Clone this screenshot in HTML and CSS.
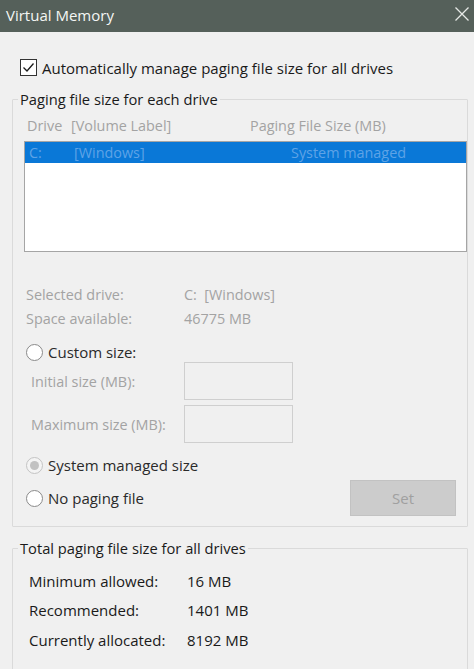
FILE: index.html
```html
<!DOCTYPE html>
<html>
<head>
<meta charset="utf-8">
<link rel="stylesheet" href="styles.css">
</head>
<body>
<div class="window">
  <div class="titlebar">
    <span class="title">Virtual Memory</span>
    <svg class="close" width="14" height="14" viewBox="0 0 14 14"><path d="M0.5 0.5 L13.5 13.5 M13.5 0.5 L0.5 13.5" stroke="#e6e9e6" stroke-width="1.3" fill="none"/></svg>
  </div>
  <div class="main">
    <div class="auto-row">
      <span class="checkbox"><svg width="15" height="15" viewBox="0 0 15 15"><path d="M2.5 7.5 L6 11 L12.5 3.5" stroke="#1a1a1a" stroke-width="1.3" fill="none"/></svg></span>
      <span class="auto-label">Automatically manage paging file size for all drives</span>
    </div>

    <div class="group group-drives">
      <div class="group-label">Paging file size for each drive</div>
      <div class="list-header disabled">
        <span class="col-drive">Drive</span><span class="col-label">[Volume Label]</span><span class="col-size">Paging File Size (MB)</span>
      </div>
      <div class="listbox">
        <div class="list-row selected">
          <span class="row-drive">C:</span><span class="row-label">[Windows]</span><span class="row-size">System managed</span>
        </div>
      </div>

      <div class="info disabled">
        <span>Selected drive:</span><span>C:&nbsp;&nbsp;[Windows]</span>
        <span>Space available:</span><span>46775 MB</span>
      </div>

      <div class="radio-row custom-row">
        <span class="radio"></span><span class="radio-label">Custom size:</span>
      </div>
      <div class="size-row initial-row">
        <span class="size-label disabled">Initial size (MB):</span><span class="textbox"></span>
      </div>
      <div class="size-row max-row">
        <span class="size-label disabled">Maximum size (MB):</span><span class="textbox"></span>
      </div>
      <div class="radio-row system-row">
        <span class="radio radio-checked"><span class="dot"></span></span><span class="radio-label">System managed size</span>
      </div>
      <div class="radio-row nopage-row">
        <span class="radio"></span><span class="radio-label">No paging file</span>
        <span class="set-button">Set</span>
      </div>
    </div>

    <div class="group group-total">
      <div class="group-label">Total paging file size for all drives</div>
      <div class="totals">
        <span>Minimum allowed:</span><span>16 MB</span>
        <span>Recommended:</span><span>1401 MB</span>
        <span>Currently allocated:</span><span>8192 MB</span>
      </div>
    </div>
  </div>
</div>
</body>
</html>
```

FILE: styles.css
```css
* { box-sizing: border-box; }
html, body { margin: 0; padding: 0; }
body {
  font-family: "Open Sans", "Noto Sans", "Liberation Sans", sans-serif;
  font-size: 14px;
  color: #1a1a1a;
  background: #f0f0f0;
}
.window {
  width: 474px;
  height: 669px;
  overflow: hidden;
  background: #f0f0f0;
}
.titlebar {
  height: 32px;
  background: #55605a;
  display: flex;
  align-items: center;
  justify-content: space-between;
  padding: 0 5px 2px 6px;
}
.title {
  color: #f4f6f4;
  font-size: 15px;
}
.close { margin-top: -2px; }

.main {
  padding: 0 6px 0 12px;
}
.auto-row {
  margin-top: 27px;
  height: 17px;
  padding-left: 8px;
  display: flex;
  align-items: center;
}
.checkbox {
  width: 17px;
  height: 17px;
  border: 1px solid #333;
  background: #fff;
  display: flex;
  align-items: center;
  justify-content: center;
  flex: none;
}
.auto-label {
  margin-left: 5px;
  font-size: 15px;
  white-space: nowrap;
}

.group {
  border: 1px solid #dadada;
  border-radius: 1px;
}
.group-drives {
  margin-top: 23px;
  height: 428px;
}
.group-total {
  margin-top: 21px;
  height: 200px;
}
.group-label {
  margin: -11px 0 0 5px;
  padding: 0 2px;
  width: fit-content;
  line-height: 20px;
  height: 20px;
  background: #f0f0f0;
  font-size: 14.7px;
  white-space: nowrap;
}
.disabled { color: #a3a3a3; }

.list-header {
  margin-top: 7px;
  line-height: 20px;
  height: 20px;
  padding-left: 14px;
  display: flex;
  font-size: 14.4px;
  white-space: nowrap;
}
.col-drive { width: 44px; }
.col-label { width: 179px; }

.listbox {
  margin: 5px 0 0 11px;
  height: 111px;
  border: 1px solid #a5a5a5;
  background: #fff;
}
.list-row {
  height: 21px;
  line-height: 21px;
  display: flex;
  white-space: nowrap;
  font-size: 14.4px;
}
.list-row.selected {
  background: #0a78d7;
  color: #5ea3e6;
}
.row-drive { width: 49px; padding-left: 4px; }
.row-label { width: 217px; }

.info {
  margin-top: 30px;
  padding-left: 13px;
  display: grid;
  grid-template-columns: 158px auto;
  grid-auto-rows: 24px;
  align-items: center;
  font-size: 14.4px;
}

.radio-row {
  display: flex;
  align-items: center;
  padding-left: 13px;
  font-size: 15px;
}
.custom-row { margin-top: 12px; height: 20px; }
.system-row { margin-top: 12px; height: 20px; }
.nopage-row { margin-top: 5px; height: 36px; }
.radio {
  width: 17px;
  height: 17px;
  border-radius: 50%;
  border: 1px solid #8a8a8a;
  background: #fff;
  flex: none;
  display: flex;
  align-items: center;
  justify-content: center;
}
.radio-checked {
  border-color: #c4c4c4;
  background: #f4f4f4;
}
.dot {
  width: 9px;
  height: 9px;
  border-radius: 50%;
  background: #c2c2c2;
}
.radio-label {
  margin-left: 5px;
  color: #2a2a2a;
}

.size-row {
  display: flex;
  align-items: center;
  height: 38px;
  padding-left: 18px;
}
.max-row { margin-top: 5px; }
.size-label {
  width: 153px;
  font-size: 14.4px;
  white-space: nowrap;
}
.textbox {
  width: 109px;
  height: 38px;
  border: 1px solid #cfcfcf;
  background: #f0f0f0;
}

.set-button {
  margin-left: auto;
  margin-right: 11px;
  width: 106px;
  height: 36px;
  background: #cccccc;
  border: 1px solid #c2c2c2;
  color: #a0a0a0;
  display: flex;
  align-items: center;
  justify-content: center;
  font-size: 15px;
}

.totals {
  margin-top: 8px;
  padding-left: 16px;
  display: grid;
  grid-template-columns: 158px auto;
  grid-auto-rows: 29.5px;
  align-items: center;
  font-size: 15px;
}
```
